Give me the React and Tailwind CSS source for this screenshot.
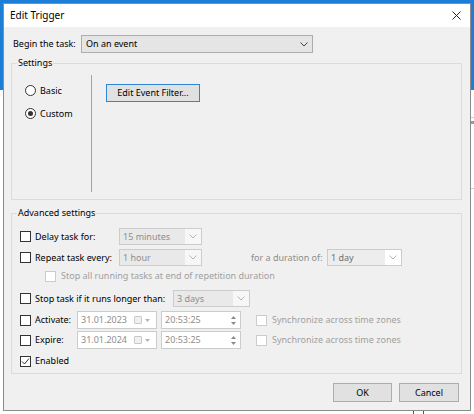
import React from 'react';

function Chevron({ color = '#606060' }) {
    return (
        <svg width="8" height="5" viewBox="0 0 8 5" fill="none">
            <path d="M0.5 0.5 L4 4 L7.5 0.5" stroke={color} strokeWidth="1" />
        </svg>
    );
}

function Checkbox({ checked, disabled }) {
    return (
        <span className={`flex h-[11px] w-[11px] shrink-0 items-center justify-center border bg-white ${disabled ? 'border-[#cccccc]' : 'border-[#333333]'}`}>
            {checked && (
                <svg width="9" height="9" viewBox="0 0 9 9" fill="none">
                    <path d="M1 4.5 L3.5 7 L8 1.5" stroke="#333333" strokeWidth="1" />
                </svg>
            )}
        </span>
    );
}

function Radio({ checked }) {
    return (
        <span className="flex h-[11px] w-[11px] shrink-0 items-center justify-center rounded-full border border-[#333333] bg-white">
            {checked && <span className="h-[5px] w-[5px] rounded-full bg-[#333333]" />}
        </span>
    );
}

function Combo({ value, w, light }) {
    return (
        <div className={`flex h-full ${w} border border-[#cccccc] ${light ? 'bg-white' : 'bg-[#f7f7f7]'}`}>
            <div className={`flex flex-1 items-center pl-[3px] ${light ? 'bg-[#ededed] text-[#6d6d6d]' : 'bg-[#e9e9e9] text-[#8d8d8d]'}`}>{value}</div>
            <div className="flex w-[16px] items-center justify-center">
                <Chevron color="#b5b5b5" />
            </div>
        </div>
    );
}

function DateBox({ value }) {
    return (
        <div className="flex h-full w-[80px] items-center border border-[#cccccc] bg-white pl-[3px] text-[#8d8d8d]">
            <span className="flex-1">{value}</span>
            <span className="mr-[3px] h-[8px] w-[8px] rounded-[1px] border border-[#c8c8c8] bg-[#f0f0f0]" />
            <svg className="mr-[6px]" width="5" height="3" viewBox="0 0 5 3">
                <path d="M0 0 L5 0 L2.5 3 Z" fill="#b5b5b5" />
            </svg>
        </div>
    );
}

function TimeBox({ value }) {
    return (
        <div className="flex h-full w-[80px] items-center border border-[#cccccc] bg-white pl-[3px] text-[#8d8d8d]">
            <span className="flex-1">{value}</span>
            <span className="mr-[4px] flex flex-col gap-[3px]">
                <svg width="5" height="3" viewBox="0 0 5 3"><path d="M0 3 L5 3 L2.5 0 Z" fill="#8a8a8a" /></svg>
                <svg width="5" height="3" viewBox="0 0 5 3"><path d="M0 0 L5 0 L2.5 3 Z" fill="#8a8a8a" /></svg>
            </span>
        </div>
    );
}

function Group({ label, className, children }) {
    return (
        <div className={`relative ml-[7px] mr-[8px] border border-[#dcdcdc] ${className}`}>
            <span className="absolute -top-[8px] left-[5px] bg-[#f0f0f0] px-[1px] leading-[14px]">{label}</span>
            {children}
        </div>
    );
}

export default function App() {
    return (
        <div className="relative h-[414px] w-[474px] overflow-hidden bg-white font-['Noto_Sans',sans-serif] text-[9px] text-black">
            {/* windows behind the dialog */}
            <div className="absolute left-0 top-0 h-[90px] w-full bg-[#1c7ed6]" />
            <div className="absolute right-0 top-[117px] h-px w-[4px] bg-[#cfcfcf]" />
            <div className="absolute right-0 top-[121px] h-[3px] w-[4px] bg-[#9a9a9a]" />
            <div className="absolute right-0 top-[188px] h-px w-[4px] bg-[#cfcfcf]" />
            <div className="absolute bottom-0 left-[413px] h-[4px] w-px bg-[#555555]" />
            <div className="absolute bottom-0 left-[423px] h-[4px] w-px bg-[#555555]" />

            <div className="absolute left-[3px] top-[3px] flex h-[408px] w-[468px] flex-col border border-[#8c8c8c] bg-[#f0f0f0]">
                <div className="flex h-[23px] shrink-0 items-center justify-between bg-white pl-[6px] pr-[9px] text-[10px]">
                    <span>Edit Trigger</span>
                    <svg width="9" height="9" viewBox="0 0 9 9" fill="none">
                        <path d="M0.5 0.5 L8.5 8.5 M8.5 0.5 L0.5 8.5" stroke="#222222" strokeWidth="1" />
                    </svg>
                </div>

                <div className="mt-[8px] flex h-[18px] items-center pl-[9px]">
                    <span className="w-[68px]">Begin the task:</span>
                    <div className="flex h-full w-[232px] items-center border border-[#adadad] bg-[#e5e5e5] pl-[4px] pr-[4px]">
                        <span className="flex-1">On an event</span>
                        <Chevron color="#444444" />
                    </div>
                </div>

                <Group label="Settings" className="mt-[10px] h-[137px]">
                    <div className="flex h-full">
                        <div className="flex w-[79px] flex-col gap-[12px] pl-[13px] pt-[21px]">
                            <label className="flex h-[11px] items-center gap-[4px]">
                                <Radio />
                                <span>Basic</span>
                            </label>
                            <label className="flex h-[11px] items-center gap-[4px]">
                                <Radio checked />
                                <span>Custom</span>
                            </label>
                        </div>
                        <div className="mt-[11px] h-[117px] w-px bg-[#a5a5a5]" />
                        <div className="ml-[14px] mt-[20px]">
                            <button className="flex h-[18px] w-[94px] items-center justify-center border border-[#2f86d3] bg-[#e1e1e1]">
                                Edit Event Filter...
                            </button>
                        </div>
                    </div>
                </Group>

                <Group label="Advanced settings" className="mt-[13px] h-[161px]">
                    <div className="flex flex-col pt-[14px]">
                        <div className="flex h-[17px] items-center pl-[8px]">
                            <Checkbox />
                            <span className="ml-[4px] w-[84px]">Delay task for:</span>
                            <Combo value="15 minutes" w="w-[83px]" />
                        </div>
                        <div className="mt-[4px] flex h-[17px] items-center pl-[8px]">
                            <Checkbox />
                            <span className="ml-[4px] w-[84px]">Repeat task every:</span>
                            <Combo value="1 hour" w="w-[83px]" />
                            <span className="ml-[49px] w-[76px] text-[#8d8d8d]">for a duration of:</span>
                            <Combo value="1 day" w="w-[75px]" light />
                        </div>
                        <div className="mt-[2px] flex h-[16px] items-center pl-[33px]">
                            <Checkbox disabled />
                            <span className="ml-[5px] text-[#a0a0a0]">Stop all running tasks at end of repetition duration</span>
                        </div>
                        <div className="mt-[6px] flex h-[17px] items-center pl-[8px]">
                            <Checkbox />
                            <span className="ml-[4px] w-[138px]">Stop task if it runs longer than:</span>
                            <Combo value="3 days" w="w-[77px]" />
                        </div>
                        <div className="mt-[4px] flex h-[18px] items-center pl-[8px]">
                            <Checkbox />
                            <span className="ml-[4px] w-[42px]">Activate:</span>
                            <DateBox value="31.01.2023" />
                            <div className="ml-[4px] h-full"><TimeBox value="20:53:25" /></div>
                            <span className="ml-[15px]"><Checkbox disabled /></span>
                            <span className="ml-[5px] text-[#a0a0a0]">Synchronize across time zones</span>
                        </div>
                        <div className="mt-[2px] flex h-[18px] items-center pl-[8px]">
                            <Checkbox />
                            <span className="ml-[4px] w-[42px]">Expire:</span>
                            <DateBox value="31.01.2024" />
                            <div className="ml-[4px] h-full"><TimeBox value="20:53:25" /></div>
                            <span className="ml-[15px]"><Checkbox disabled /></span>
                            <span className="ml-[5px] text-[#a0a0a0]">Synchronize across time zones</span>
                        </div>
                        <div className="mt-[4px] flex h-[16px] items-center pl-[8px]">
                            <Checkbox checked />
                            <span className="ml-[4px]">Enabled</span>
                        </div>
                    </div>
                </Group>

                <div className="mr-[11px] mt-[9px] flex justify-end gap-[7px]">
                    <button className="h-[19px] w-[59px] border border-[#adadad] bg-[#e1e1e1]">OK</button>
                    <button className="h-[19px] w-[60px] border border-[#adadad] bg-[#e1e1e1]">Cancel</button>
                </div>
            </div>
        </div>
    );
}
